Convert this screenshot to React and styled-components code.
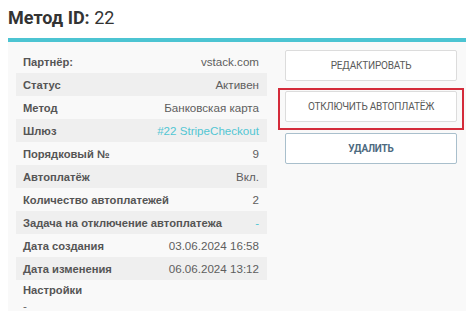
import React from "react";
import styled, { createGlobalStyle } from "styled-components";

const Global = createGlobalStyle`
  html, body { margin: 0; padding: 0; background: #fff; }
  body { padding: 8px 8px 0 8px; font-family: "Liberation Sans", Arial, sans-serif; }
`;

const Title = styled.h1`
  margin: 0;
  height: 30px;
  line-height: 20px;
  font-family: Roboto, "Liberation Sans", sans-serif;
  font-size: 18px;
  font-weight: 400;
  color: #333;
  b { font-weight: 700; }
`;

const Panel = styled.div`
  border-top: 4px solid #4cc4d2;
  background: #f9f9f9;
  width: 458px;
  height: 273px;
  box-sizing: border-box;
  padding: 8px 9px 0 8px;
  display: flex;
  gap: 18px;
  align-items: flex-start;
`;

const Table = styled.div`
  width: 251px;
  display: flex;
  flex-direction: column;
`;

const Row = styled.div`
  height: 23px;
  display: flex;
  align-items: center;
  justify-content: space-between;
  padding: 0 8px 0 7px;
  background: ${(p) => (p.$striped ? "#efefef" : "transparent")};
  color: #555;
`;

const Label = styled.span`
  font-size: 11.2px;
  font-weight: 700;
  color: #555;
`;

const Value = styled.span`
  font-size: 11.6px;
  color: ${(p) => (p.$link ? "#52c6d3" : "#5e5e5e")};
`;

const Block = styled.div`
  padding: 3px 7px 0;
  display: flex;
  flex-direction: column;
  line-height: 15px;
  color: #666;
  font-size: 11.6px;
`;

const Actions = styled.div`
  flex: 1;
  display: flex;
  flex-direction: column;
`;

const Highlight = styled.div`
  margin: 7px -7px 3px;
  padding: 1px 5px 6px;
  border: 2px solid #d42b3a;
`;

const Button = styled.button`
  width: 100%;
  height: 31px;
  background: #fff;
  border: 1px solid ${(p) => (p.$danger ? "#a9bfcc" : "#dcdcdc")};
  border-radius: 2px;
  font-family: Roboto, "Liberation Sans", sans-serif;
  font-size: 10px;
  font-weight: ${(p) => (p.$danger ? 700 : 400)};
  letter-spacing: -0.2px;
  text-transform: uppercase;
  color: ${(p) => (p.$danger ? "#4d6a80" : "#5a5a5a")};
  cursor: pointer;
  display: block;
`;

const rows = [
  ["Партнёр:", "vstack.com"],
  ["Статус", "Активен"],
  ["Метод", "Банковская карта"],
  ["Шлюз", "#22 StripeCheckout", true],
  ["Порядковый №", "9"],
  ["Автоплатёж", "Вкл."],
  ["Количество автоплатежей", "2"],
  ["Задача на отключение автоплатежа", "-", true],
  ["Дата создания", "03.06.2024 16:58"],
  ["Дата изменения", "06.06.2024 13:12"],
];

export default function App() {
  return (
    <>
      <Global />
      <Title>
        <b>Метод ID:</b> 22
      </Title>
      <Panel>
        <Table>
          {rows.map(([l, v, link], i) => (
            <Row key={l} $striped={i % 2 === 1}>
              <Label>{l}</Label>
              <Value $link={link}>{v}</Value>
            </Row>
          ))}
          <Block>
            <Label>Настройки</Label>
            <span>-</span>
          </Block>
        </Table>
        <Actions>
          <Button>Редактировать</Button>
          <Highlight>
            <Button>Отключить автоплатёж</Button>
          </Highlight>
          <Button $danger>Удалить</Button>
        </Actions>
      </Panel>
    </>
  );
}
